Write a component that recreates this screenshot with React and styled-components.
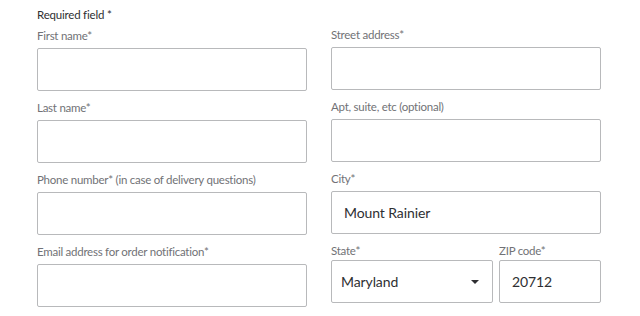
import React from "react";
import styled, { createGlobalStyle } from "styled-components";

const GlobalStyle = createGlobalStyle`
  body {
    margin: 0;
    background: #ffffff;
    font-family: "Lato", "Noto Sans", sans-serif;
  }
`;

const Page = styled.div`
  width: 640px;
  height: 316px;
  padding: 7px 0 0 37px;
  box-sizing: border-box;
  overflow: hidden;
`;

const Required = styled.div`
  font-size: 11.5px;
  line-height: 16px;
  letter-spacing: -0.2px;
  color: #2e2f32;
  margin-bottom: 4px;
`;

const Columns = styled.div`
  display: grid;
  grid-template-columns: 270px 270px;
  column-gap: 24px;
`;

const Column = styled.div`
  display: flex;
  flex-direction: column;
  gap: 9px;
  padding-top: ${(p) => p.$offset || 0}px;
`;

const Field = styled.div`
  display: flex;
  flex-direction: column;
  gap: ${(p) => (p.$tight ? 1 : 4)}px;
  width: ${(p) => p.$width || "100%"};
`;

const Label = styled.label`
  font-size: 11.5px;
  line-height: 16px;
  letter-spacing: -0.25px;
  color: #717276;
  white-space: nowrap;
`;

const Box = styled.div`
  position: relative;
  height: 43px;
  box-sizing: border-box;
  border: 1px solid #b8b9bb;
  border-radius: 2px;
  display: flex;
  align-items: center;
  padding: 0 ${(p) => (p.$select ? 9 : 12)}px;
  font-size: 14px;
  letter-spacing: -0.1px;
  color: #2e2f32;
`;

const Pair = styled.div`
  display: flex;
  gap: 6px;
`;

const Caret = styled.svg`
  position: absolute;
  right: 13px;
  top: 50%;
  margin-top: -2px;
`;

const TextField = ({ label, value, tight, width }) => (
  <Field $tight={tight} $width={width}>
    <Label>{label}</Label>
    <Box>{value}</Box>
  </Field>
);

export default function App() {
  return (
    <Page>
      <GlobalStyle />
      <Required>Required field *</Required>
      <Columns>
        <Column $offset={1}>
          <TextField label="First name*" />
          <TextField label="Last name*" />
          <TextField label="Phone number* (in case of delivery questions)" />
          <TextField label="Email address for order notification*" />
        </Column>
        <Column>
          <TextField label="Street address*" />
          <TextField label="Apt, suite, etc (optional)" />
          <TextField label="City*" value="Mount Rainier" />
          <Pair>
            <Field $tight $width="162px">
              <Label>State*</Label>
              <Box $select>
                Maryland
                <Caret width="8" height="4" viewBox="0 0 8 4">
                  <path d="M0 0h8L4 4z" fill="#2e2f32" />
                </Caret>
              </Box>
            </Field>
            <TextField tight width="102px" label="ZIP code*" value="20712" />
          </Pair>
        </Column>
      </Columns>
    </Page>
  );
}
